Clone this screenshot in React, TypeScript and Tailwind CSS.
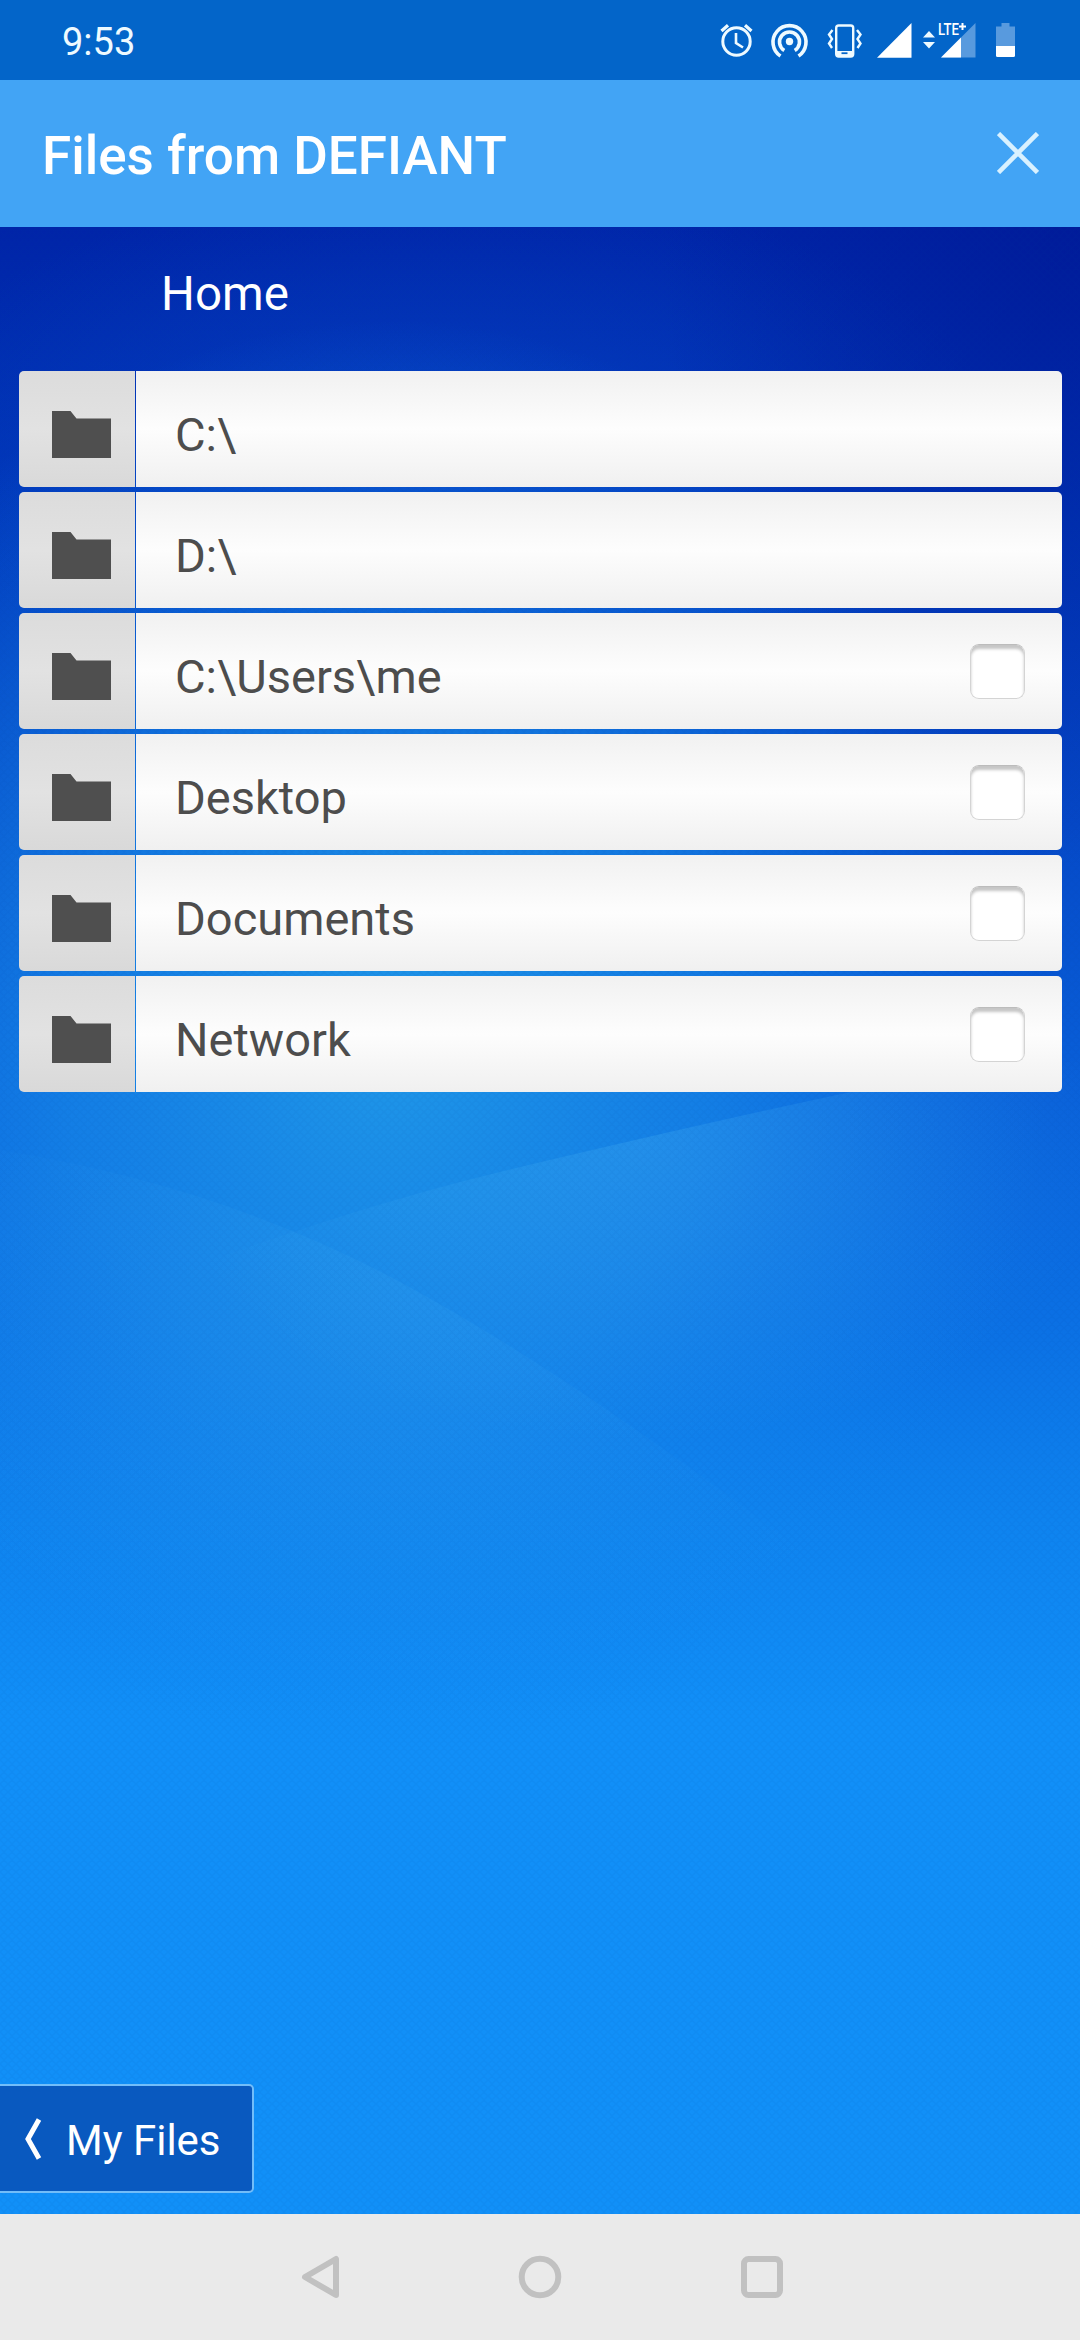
import type { ReactNode } from "react";

type Entry = { name: string; selectable: boolean };

const entries: Entry[] = [
  { name: "C:\\", selectable: false },
  { name: "D:\\", selectable: false },
  { name: "C:\\Users\\me", selectable: true },
  { name: "Desktop", selectable: true },
  { name: "Documents", selectable: true },
  { name: "Network", selectable: true },
];

function StatusBar() {
  return (
    <div className="flex h-20 items-center justify-between bg-[#0365c9] pr-[60px] pl-[62px] text-[#eefaff]">
      <span className="pt-1 text-[38px] leading-none">9:53</span>
      <svg width="300" height="80" viewBox="720 0 300 80" fill="none">
        {/* alarm */}
        <g stroke="currentColor" strokeWidth="3">
          <circle cx="736.5" cy="41.5" r="13.7" />
          <path d="M736 33v10l7 4.5" strokeWidth="2.6" />
          <path d="M721.5 31l6.5-5.8M751.5 31l-6.5-5.8" strokeWidth="3.2" />
        </g>
        {/* hotspot */}
        <circle cx="789.5" cy="41.5" r="3.7" fill="currentColor" />
        <g stroke="currentColor" strokeWidth="3.6">
          <path d="M784.3 50.5a10 10 0 1 1 10.4 0" />
          <path d="M780.5 56a16.5 16.5 0 1 1 18 0" />
        </g>
        {/* vibrate */}
        <g stroke="currentColor" strokeWidth="2.4">
          <rect x="836.2" y="25.5" width="17" height="31" rx="2.5" />
          <path d="M836 53.5h17" strokeWidth="5" />
          <path d="M832.5 30l-3.5 4.5 3 4.5-3 4.5 3 4.5M857 30l3.5 4.5-3 4.5 3 4.5-3 4.5" />
          <path d="M841.5 53.2h6" stroke="#0365c9" strokeWidth="1.8" />
        </g>
        {/* signal */}
        <path d="M911.5 23v34.8H877z" fill="#fff" />
        <path d="M923 37.5l6-6.5 6 6.500zM923 42l6 6.500 6-6.500z" fill="currentColor" />
        <path d="M975.5 23v34.5H941z" fill="#589ade" />
        <path d="M961 37.5v20h-20z" fill="#fff" />
        <text x="938" y="34.500" fill="#fff" fontSize="16" fontWeight="500" textLength="21" lengthAdjust="spacingAndGlyphs">
          LTE
        </text>
        <path d="M959 26.500h7M962.500 23v7" stroke="#fff" strokeWidth="2" />
        {/* battery */}
        <path d="M1001.5 23h8v3.5h5.500V46h-19V26.500h5.500z" fill="#589ade" />
        <path d="M996 46h19v9.5q0 1.5-1.5 1.5h-16q-1.5 0-1.5-1.5z" fill="#fff" />
      </svg>
    </div>
  );
}

function TitleBar() {
  return (
    <header className="flex h-[147px] items-center justify-between bg-[#42a4f5] pr-[41px] pb-px pl-[42px]">
      <h1 className="pt-1.5 text-[53px] leading-none font-medium text-white">Files from DEFIANT</h1>
      <button aria-label="Close" className="text-[#d8f1ff]">
        <svg width="42" height="42" viewBox="0 0 42 42" stroke="currentColor" strokeWidth="4.6">
          <path d="M1.5 1.5l39 39M40.5 1.5l-39 39" />
        </svg>
      </button>
    </header>
  );
}

function Wallpaper() {
  return (
    <svg aria-hidden="true" className="col-start-1 row-start-1" width="1080" height="1987" viewBox="0 227 1080 1987">
      <defs>
        <linearGradient id="base" gradientUnits="userSpaceOnUse" x1="0" y1="227" x2="0" y2="2214">
          <stop offset="0" stopColor="#0024a8" />
          <stop offset="0.15" stopColor="#0038bb" />
          <stop offset="0.3" stopColor="#0549c8" />
          <stop offset="0.44" stopColor="#0961da" />
          <stop offset="0.55" stopColor="#0b70e4" />
          <stop offset="0.65" stopColor="#0e83ef" />
          <stop offset="0.75" stopColor="#118ff8" />
          <stop offset="1" stopColor="#1190f8" />
        </linearGradient>
        <radialGradient id="glow" gradientUnits="userSpaceOnUse" cx="0" cy="0" r="1" gradientTransform="translate(390 1040) scale(660 720)">
          <stop offset="0" stopColor="#229eea" stopOpacity="0.9" />
          <stop offset="0.5" stopColor="#1a90ec" stopOpacity="0.6" />
          <stop offset="1" stopColor="#1285f0" stopOpacity="0" />
        </radialGradient>
        <radialGradient id="top" gradientUnits="userSpaceOnUse" cx="0" cy="0" r="1" gradientTransform="translate(440 440) scale(560 260)">
          <stop offset="0" stopColor="#0644c6" stopOpacity="0.6" />
          <stop offset="1" stopColor="#0644c6" stopOpacity="0" />
        </radialGradient>
        <radialGradient id="corner" gradientUnits="userSpaceOnUse" cx="0" cy="0" r="1" gradientTransform="translate(1080 227) scale(420 640)">
          <stop offset="0" stopColor="#001590" stopOpacity="0.6" />
          <stop offset="1" stopColor="#001590" stopOpacity="0" />
        </radialGradient>
        <radialGradient id="sweep" gradientUnits="userSpaceOnUse" cx="0" cy="0" r="1" gradientTransform="translate(640 1140) scale(480 300)">
          <stop offset="0" stopColor="#4ab4f4" stopOpacity="0.26" />
          <stop offset="1" stopColor="#4ab4f4" stopOpacity="0" />
        </radialGradient>
        <radialGradient id="arc" gradientUnits="userSpaceOnUse" cx="0" cy="0" r="1" gradientTransform="translate(400 1300) scale(560 380)">
          <stop offset="0" stopColor="#4ab4f4" stopOpacity="0.13" />
          <stop offset="1" stopColor="#4ab4f4" stopOpacity="0" />
        </radialGradient>
        <pattern id="weave" width="8" height="8" patternUnits="userSpaceOnUse">
          <path d="M0 0l4 4 4-4M0 8l4-4 4 4" fill="none" stroke="#003a9c" strokeOpacity="0.05" strokeWidth="1.5" />
        </pattern>
      </defs>
      <rect y="227" width="1080" height="1987" fill="url(#base)" />
      <rect y="227" width="1080" height="1987" fill="url(#top)" />
      <rect y="227" width="1080" height="1987" fill="url(#glow)" />
      <rect y="227" width="1080" height="1987" fill="url(#corner)" />
      <path d="M0 1340Q300 1220 500 1172T860 1090L1080 1060V1700H0z" fill="url(#sweep)" />
      <path d="M0 1150Q220 1185 400 1282T840 1580L1080 1760H0z" fill="url(#arc)" />
      <rect y="227" width="1080" height="1987" fill="url(#weave)" />
    </svg>
  );
}

function FileRow({ entry }: { entry: Entry }) {
  return (
    <li className="flex h-[116px] gap-px overflow-hidden rounded-[5px]">
      <div className="flex w-[116px] items-center bg-linear-to-b from-[#dcdcdc] via-[#e2e2e2] to-[#d9d9d9] pt-[11px] pl-[33px]">
        <svg width="59" height="47" viewBox="0 0 59 47" fill="#4f4f4f">
          <path d="M0 0h18.5l6 7.5H59V47H0z" />
        </svg>
      </div>
      <div className="flex flex-1 items-center justify-between bg-linear-to-b from-[#f1f1f1] via-[#fdfdfd] to-[#f0f0f0] pr-[37px] pl-[39px]">
        <span className="pt-2.5 text-[47px] leading-none text-[#4d4d4d]">{entry.name}</span>
        {entry.selectable && (
          <button
            role="checkbox"
            aria-checked="false"
            aria-label={entry.name}
            className="size-[55px] rounded-[9px] border border-[#d4d4d4] border-t-[#bcbcbc] bg-white shadow-[inset_0_4px_3px_#c6c6c6]"
          />
        )}
      </div>
    </li>
  );
}

function NavButton({ label, children }: { label: string; children: ReactNode }) {
  return (
    <button aria-label={label}>
      <svg width="44" height="44" viewBox="0 0 44 44" fill="none" stroke="#c1c1c1" strokeWidth="6" strokeLinejoin="round">
        {children}
      </svg>
    </button>
  );
}

export default function App() {
  return (
    <div className="flex h-[2340px] w-[1080px] flex-col overflow-hidden font-['Roboto',sans-serif]">
      <StatusBar />
      <TitleBar />

      <main className="grid h-[1987px] grid-cols-1 grid-rows-1">
        <Wallpaper />
        <div className="z-10 col-start-1 row-start-1 flex flex-col items-start">
          <h2 className="flex h-36 items-center pb-[9px] pl-[161px] text-[47.5px] leading-none text-white">Home</h2>
          <ul className="flex w-full flex-col gap-[5px] pr-[18px] pl-[19px]">
            {entries.map((entry) => (
              <FileRow key={entry.name} entry={entry} />
            ))}
          </ul>
          <button className="mt-auto mb-[21px] flex h-[109px] w-[254px] items-center gap-6 rounded-r-[5px] border-2 border-l-0 border-[#72bdf9] bg-[#0959bf] pl-6 text-white">
            <svg width="18" height="42" viewBox="0 0 18 42" fill="none" stroke="currentColor" strokeWidth="5">
              <path d="M15 1.5L4 21l11 19.5" />
            </svg>
            <span className="pt-1 text-[42px] leading-none">My Files</span>
          </button>
        </div>
      </main>

      <nav className="flex h-[126px] items-center justify-center gap-[178px] bg-[#eaeaea]">
        <NavButton label="Back">
          <path d="M38 4v36L7 22z" transform="translate(2)" />
        </NavButton>
        <NavButton label="Home">
          <circle cx="22" cy="22" r="18.3" />
        </NavButton>
        <NavButton label="Recent apps">
          <rect x="4" y="4" width="36" height="36" rx="4.5" />
        </NavButton>
      </nav>
    </div>
  );
}
